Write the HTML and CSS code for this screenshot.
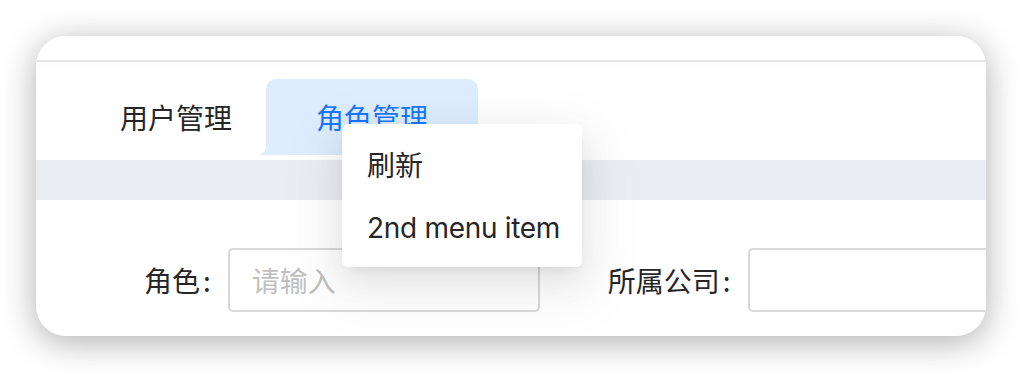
FILE: index.html
```html
<!DOCTYPE html>
<html lang="zh-CN">
<head>
<meta charset="utf-8">
<title>角色管理</title>
<link rel="stylesheet" href="styles.css">
</head>
<body>
<div class="card">
  <div class="topband"></div>
  <div class="divider"></div>
  <div class="tabbar">
    <div class="tab">用户管理</div>
    <div class="tab active">角色管理</div>
  </div>
  <div class="grayband"></div>
  <form class="form">
    <div class="item item-role">
      <label class="label">角色</label>
      <div class="input input-role"><span class="placeholder">请输入</span></div>
    </div>
    <div class="item item-company">
      <label class="label">所属公司</label>
      <div class="input input-company"></div>
    </div>
  </form>
  <div class="menu">
    <div class="menu-item">刷新</div>
    <div class="menu-item"><span class="latin">2nd menu item</span></div>
  </div>
</div>
</body>
</html>
```

FILE: styles.css
```css
* { box-sizing: border-box; }
html, body { margin: 0; padding: 0; background: #ffffff; }
body {
  width: 1022px;
  height: 372px;
  overflow: hidden;
  padding: 36px 0 0 36px;
  font-family: Inter, "Noto Sans CJK SC", sans-serif;
  color: #262626;
}
.card {
  position: relative;
  width: 950px;
  height: 300px;
  background: #fff;
  border-radius: 30px;
  overflow: hidden;
  box-shadow: 0 6px 34px rgba(0, 0, 0, 0.32);
}
.topband { height: 24px; background: #fff; }
.divider {
  height: 2px;
  background: #e6e7e9;
  box-shadow: 0 2px 6px rgba(0, 0, 0, 0.05);
  position: relative;
}
.tabbar {
  height: 98px;
  display: flex;
  align-items: flex-start;
  padding: 17px 0 0 50px;
}
.tab {
  height: 76px;
  display: flex;
  align-items: center;
  padding: 0 34px;
  font-family: "Noto Sans CJK SC", sans-serif;
  font-size: 28px;
  color: #262626;
  white-space: nowrap;
}
.tab.active {
  position: relative;
  padding: 0 50px;
  color: #1677ff;
  background: #deedfd;
  border-radius: 10px 10px 0 0;
}
.tab.active::before {
  content: "";
  position: absolute;
  left: -10px;
  bottom: 0;
  width: 10px;
  height: 10px;
  background: radial-gradient(circle at 0 0, transparent 10px, #deedfd 10.5px);
}
.grayband { height: 40px; background: #eaedf1; }
.form {
  display: flex;
  align-items: center;
  padding: 48px 0 0 108px;
  margin: 0;
  width: 1100px;
}
.item { display: flex; align-items: center; flex-shrink: 0; }
.label {
  font-family: "Noto Sans CJK SC", sans-serif;
  font-size: 28px;
  color: #262626;
  white-space: nowrap;
  flex-shrink: 0;
}
.label::after {
  content: ":";
  margin: 0 17px 0 3px;
}
.item-company { margin-left: 68px; }
.input {
  height: 64px;
  border: 2px solid #d9d9d9;
  border-radius: 5px;
  display: flex;
  align-items: center;
  padding: 0 22px;
  background: #fff;
  flex-shrink: 0;
}
.input-role { width: 312px; }
.input-company { width: 320px; }
.placeholder {
  font-family: "Noto Sans CJK SC", sans-serif;
  font-size: 28px;
  color: #bfbfbf;
  white-space: nowrap;
}
.menu {
  position: absolute;
  left: 306px;
  top: 88px;
  width: 240px;
  padding: 8px 0 7px;
  background: #fff;
  border-radius: 6px;
  box-shadow: 0 12px 32px rgba(0, 0, 0, 0.08), 0 6px 12px -8px rgba(0, 0, 0, 0.12), 0 18px 56px 16px rgba(0, 0, 0, 0.05);
}
.menu-item {
  height: 64px;
  display: flex;
  align-items: center;
  padding: 0 25px;
  font-family: "Noto Sans CJK SC", sans-serif;
  font-size: 28px;
  color: #262626;
  white-space: nowrap;
}
.latin { font-family: Inter, sans-serif; letter-spacing: -0.3px; }
```
